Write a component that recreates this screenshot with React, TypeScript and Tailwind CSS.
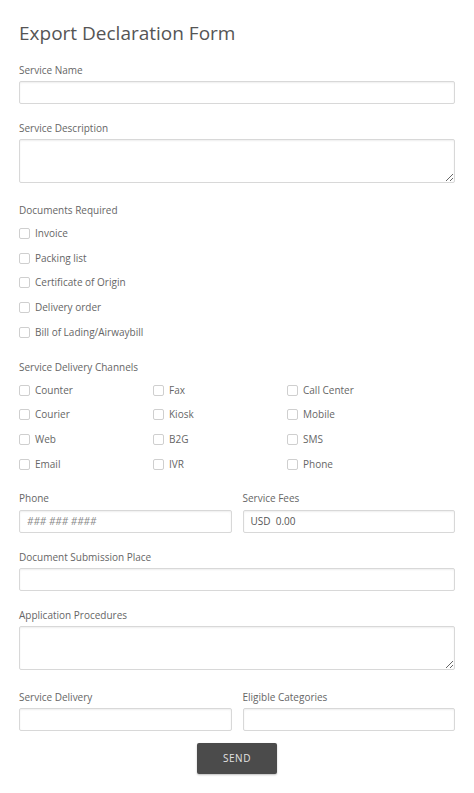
const documents = ['Invoice', 'Packing list', 'Certificate of Origin', 'Delivery order', 'Bill of Lading/Airwaybill']

const channels = ['Counter', 'Fax', 'Call Center', 'Courier', 'Kiosk', 'Mobile', 'Web', 'B2G', 'SMS', 'Email', 'IVR', 'Phone']

const inputClass =
  'block h-[23px] w-full rounded-[2px] border border-[#d8d8d8] bg-white px-[7px] text-[10px] text-[#555] shadow-[inset_0_1px_2px_rgba(0,0,0,0.07)] outline-none'

function Label({ children }: { children: React.ReactNode }) {
  return <div className="text-[10px] leading-[14px] text-[#666]">{children}</div>
}

function Check({ label }: { label: string }) {
  return (
    <label className="flex h-[24.75px] items-center">
      <span className="h-[11px] w-[11px] rounded-[2px] border border-[#cfcfcf] bg-white" />
      <span className="ml-[5px] text-[10px] text-[#666]">{label}</span>
    </label>
  )
}

export default function App() {
  return (
    <div className="min-h-screen bg-white px-[19px] pt-5 font-['Open_Sans',sans-serif]">
      <h1 className="text-[19px] leading-[26px] font-normal text-[#555]">Export Declaration Form</h1>

      <div className="mt-[17px]">
        <Label>Service Name</Label>
        <input className={`mt-[4px] ${inputClass}`} />
      </div>

      <div className="mt-[17px]">
        <Label>Service Description</Label>
        <textarea className="mt-[4px] block h-[44px] w-full rounded-[2px] border border-[#d8d8d8] bg-white shadow-[inset_0_1px_2px_rgba(0,0,0,0.07)] outline-none" />
      </div>

      <div className="mt-5">
        <Label>Documents Required</Label>
        <div className="mt-[4px]">
          {documents.map((d) => (
            <Check key={d} label={d} />
          ))}
        </div>
      </div>

      <div className="mt-[15px]">
        <Label>Service Delivery Channels</Label>
        <div className="mt-[4px] grid grid-cols-[134px_134px_1fr]">
          {channels.map((c) => (
            <Check key={c} label={c} />
          ))}
        </div>
      </div>

      <div className="mt-[14px] grid grid-cols-2 gap-x-[11px]">
        <div>
          <Label>Phone</Label>
          <input
            className={`mt-[5px] italic placeholder:text-[#888] ${inputClass}`}
            placeholder="### ### ####"
          />
        </div>
        <div>
          <Label>Service Fees</Label>
          <div className={`mt-[5px] flex items-center ${inputClass}`}>USD&nbsp;&nbsp;0.00</div>
        </div>
      </div>

      <div className="mt-[17px]">
        <Label>Document Submission Place</Label>
        <input className={`mt-[4px] ${inputClass}`} />
      </div>

      <div className="mt-[17px]">
        <Label>Application Procedures</Label>
        <textarea className="mt-[4px] block h-[44px] w-full rounded-[2px] border border-[#d8d8d8] bg-white shadow-[inset_0_1px_2px_rgba(0,0,0,0.07)] outline-none" />
      </div>

      <div className="mt-5 grid grid-cols-2 gap-x-[11px]">
        <div>
          <Label>Service Delivery</Label>
          <input className={`mt-[4px] ${inputClass}`} />
        </div>
        <div>
          <Label>Eligible Categories</Label>
          <input className={`mt-[4px] ${inputClass}`} />
        </div>
      </div>

      <div className="mt-[12px] flex justify-center">
        <button className="h-[31px] w-[80px] rounded-[2px] bg-[#4b4b4b] text-[10px] tracking-[0.5px] text-[#e2e2e2] shadow-[0_1px_2px_rgba(0,0,0,0.25)]">
          SEND
        </button>
      </div>
    </div>
  )
}
